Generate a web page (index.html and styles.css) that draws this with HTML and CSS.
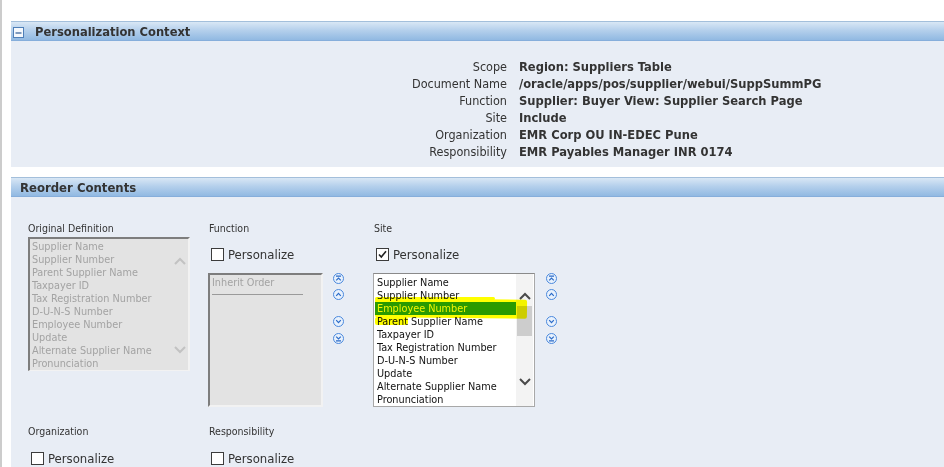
FILE: index.html
```html
<!DOCTYPE html>
<html>
<head>
<meta charset="utf-8">
<link rel="stylesheet" href="styles.css">
</head>
<body>
<div class="page">
  <div class="section">
    <div class="hdr hdr-ctx">
      <span class="collapse"><svg width="11" height="11" viewBox="0 0 11 11"><rect x="0.5" y="0.5" width="10" height="10" fill="#f4f8fd" stroke="#4f7fb8"/><path d="M2.5 6 H8.5" stroke="#2d5a94" stroke-width="1.2"/></svg></span>
      <span class="hdr-title">Personalization Context</span>
    </div>
    <div class="body ctx">
      <div class="lbl">Scope</div><div class="val">Region: Suppliers Table</div>
      <div class="lbl">Document Name</div><div class="val">/oracle/apps/pos/supplier/webui/SuppSummPG</div>
      <div class="lbl">Function</div><div class="val">Supplier: Buyer View: Supplier Search Page</div>
      <div class="lbl">Site</div><div class="val">Include</div>
      <div class="lbl">Organization</div><div class="val">EMR Corp OU IN-EDEC Pune</div>
      <div class="lbl">Responsibility</div><div class="val">EMR Payables Manager INR 0174</div>
    </div>
  </div>

  <div class="section sec2">
    <div class="hdr hdr-reorder"><span class="hdr-title">Reorder Contents</span></div>
    <div class="body reorder">
      <div class="col c1">
        <div class="cap">Original Definition</div>
        <div class="list list-dis">
          <div class="items">
            <div>Supplier Name</div>
            <div>Supplier Number</div>
            <div>Parent Supplier Name</div>
            <div>Taxpayer ID</div>
            <div>Tax Registration Number</div>
            <div>D-U-N-S Number</div>
            <div>Employee Number</div>
            <div>Update</div>
            <div>Alternate Supplier Name</div>
            <div>Pronunciation</div>
          </div>
          <div class="sbar sbar-dis">
            <svg class="chev-up" width="12" height="8" viewBox="0 0 12 8"><path d="M1 7 L6 2 L11 7" stroke="#c2c2c2" stroke-width="2" fill="none"/></svg>
            <svg class="chev-dn" width="12" height="8" viewBox="0 0 12 8"><path d="M1 1 L6 6 L11 1" stroke="#c2c2c2" stroke-width="2" fill="none"/></svg>
          </div>
        </div>
      </div>

      <div class="col c2">
        <div class="cap">Function</div>
        <label class="chk"><span class="box"></span>Personalize</label>
        <div class="listrow">
          <div class="list list-fn">
            <div class="fn-item">Inherit Order</div>
            <div class="fn-sep"></div>
          </div>
          <div class="movers">
            <svg class="mv mv1" width="11" height="11" viewBox="0 0 11 11"><circle cx="5.5" cy="5.5" r="5" fill="#e8f1fc" stroke="#4a88dc"/><path d="M3 3.2 H8 M3.2 7.3 L5.5 5 L7.8 7.3" stroke="#2a6bc8" stroke-width="1.2" fill="none"/></svg>
            <svg class="mv mv2" width="11" height="11" viewBox="0 0 11 11"><circle cx="5.5" cy="5.5" r="5" fill="#e8f1fc" stroke="#4a88dc"/><path d="M3.2 6.8 L5.5 4.4 L7.8 6.8" stroke="#2a6bc8" stroke-width="1.2" fill="none"/></svg>
            <svg class="mv mv3" width="11" height="11" viewBox="0 0 11 11"><circle cx="5.5" cy="5.5" r="5" fill="#e8f1fc" stroke="#4a88dc"/><path d="M3.2 4.2 L5.5 6.6 L7.8 4.2" stroke="#2a6bc8" stroke-width="1.2" fill="none"/></svg>
            <svg class="mv mv4" width="11" height="11" viewBox="0 0 11 11"><circle cx="5.5" cy="5.5" r="5" fill="#e8f1fc" stroke="#4a88dc"/><path d="M3.2 3.7 L5.5 6 L7.8 3.7 M3 7.8 H8" stroke="#2a6bc8" stroke-width="1.2" fill="none"/></svg>
          </div>
        </div>
      </div>

      <div class="col c3">
        <div class="cap">Site</div>
        <label class="chk"><span class="box checked"><svg width="11" height="11" viewBox="0 0 11 11"><path d="M2 5.5 L4.3 8 L9 2.2" stroke="#222" stroke-width="1.6" fill="none"/></svg></span>Personalize</label>
        <div class="listrow">
          <div class="list list-site">
            <div class="items">
              <div>Supplier Name</div>
              <div>Supplier Number</div>
              <div class="sel">Employee Number</div>
              <div>Parent Supplier Name</div>
              <div>Taxpayer ID</div>
              <div>Tax Registration Number</div>
              <div>D-U-N-S Number</div>
              <div>Update</div>
              <div>Alternate Supplier Name</div>
              <div>Pronunciation</div>
            </div>
            <div class="sbar">
              <svg class="chev-up" width="12" height="8" viewBox="0 0 12 8"><path d="M1 7 L6 2 L11 7" stroke="#4a4a4a" stroke-width="2" fill="none"/></svg>
              <div class="thumb"></div>
              <svg class="chev-dn" width="12" height="8" viewBox="0 0 12 8"><path d="M1 1 L6 6 L11 1" stroke="#4a4a4a" stroke-width="2" fill="none"/></svg>
            </div>
            <div class="mark mark-main"></div>
            <div class="mark mark-top"></div>
            <div class="mark mark-parent"></div>
          </div>
          <div class="movers">
            <svg class="mv mv1" width="11" height="11" viewBox="0 0 11 11"><circle cx="5.5" cy="5.5" r="5" fill="#e8f1fc" stroke="#4a88dc"/><path d="M3 3.2 H8 M3.2 7.3 L5.5 5 L7.8 7.3" stroke="#2a6bc8" stroke-width="1.2" fill="none"/></svg>
            <svg class="mv mv2" width="11" height="11" viewBox="0 0 11 11"><circle cx="5.5" cy="5.5" r="5" fill="#e8f1fc" stroke="#4a88dc"/><path d="M3.2 6.8 L5.5 4.4 L7.8 6.8" stroke="#2a6bc8" stroke-width="1.2" fill="none"/></svg>
            <svg class="mv mv3" width="11" height="11" viewBox="0 0 11 11"><circle cx="5.5" cy="5.5" r="5" fill="#e8f1fc" stroke="#4a88dc"/><path d="M3.2 4.2 L5.5 6.6 L7.8 4.2" stroke="#2a6bc8" stroke-width="1.2" fill="none"/></svg>
            <svg class="mv mv4" width="11" height="11" viewBox="0 0 11 11"><circle cx="5.5" cy="5.5" r="5" fill="#e8f1fc" stroke="#4a88dc"/><path d="M3.2 3.7 L5.5 6 L7.8 3.7 M3 7.8 H8" stroke="#2a6bc8" stroke-width="1.2" fill="none"/></svg>
          </div>
        </div>
      </div>

      <div class="col c1 row2">
        <div class="cap">Organization</div>
        <label class="chk"><span class="box"></span>Personalize</label>
      </div>
      <div class="col c2 row2">
        <div class="cap">Responsibility</div>
        <label class="chk"><span class="box"></span>Personalize</label>
      </div>
    </div>
  </div>
</div>
</body>
</html>
```

FILE: styles.css
```css
html, body {
  margin: 0;
  padding: 0;
  background: #ffffff;
  overflow: hidden;
}
body {
  width: 944px;
  height: 467px;
  font-family: "DejaVu Sans Condensed", "DejaVu Sans", sans-serif;
  font-stretch: condensed;
  color: #333333;
}
.page {
  border-left: 2px solid #cccccc;
  height: 467px;
  padding-left: 9px;
  padding-top: 21px;
  box-sizing: border-box;
  margin-right: -30px;
}
.section {
  background: #e8edf5;
}
.sec2 {
  margin-top: 10px;
}
.hdr {
  height: 20px;
  box-sizing: border-box;
  border-top: 1px solid #a3bfdb;
  border-bottom: 1px solid #86aedb;
  background: linear-gradient(#d9e7f5, #b5d0ec 45%, #91b9e2);
  display: flex;
  align-items: center;
}
.hdr-title {
  font-weight: bold;
  font-size: 13px;
  color: #333333;
}
.hdr-ctx .hdr-title {
  font-size: 12.8px;
}
.collapse {
  display: flex;
  margin-left: 2px;
  margin-right: 11px;
  margin-top: 3px;
}
.hdr-reorder .hdr-title {
  margin-left: 9px;
}
.ctx {
  display: grid;
  grid-template-columns: 496px 1fr;
  column-gap: 12px;
  padding: 17px 0 7px 0;
  font-size: 12.5px;
  line-height: 17px;
}
.lbl {
  text-align: right;
}
.val {
  font-weight: bold;
  font-size: 12.8px;
}
.reorder {
  display: grid;
  grid-template-columns: 180px 165px 1fr;
  padding: 24px 0 0 17px;
  height: 270px;
  box-sizing: border-box;
  align-content: start;
}
.cap {
  font-size: 10.5px;
  line-height: 14px;
  height: 14px;
}
.c2 .cap, .c3 .cap {
  margin-left: 1px;
}
.list-dis {
  margin-top: 2px;
  width: 162px;
  height: 134px;
  box-sizing: border-box;
  border-style: solid;
  border-width: 2px 2px 1px 2px;
  border-color: #7d7d7d #f2f2f2 #f2f2f2 #7d7d7d;
  background: #e3e3e3;
  display: flex;
}
.items {
  flex: 1;
  padding: 1px 0 0 2px;
  font-size: 10.8px;
  line-height: 13px;
  white-space: nowrap;
  overflow: hidden;
}
.list-dis .items {
  color: #a3a3a3;
}
.sbar {
  width: 17px;
  position: relative;
  display: flex;
  flex-direction: column;
  align-items: center;
}
.sbar-dis .chev-up { margin-top: 18px; }
.sbar-dis .chev-dn { margin-top: auto; margin-bottom: 16px; }
.chk {
  display: flex;
  align-items: center;
  font-size: 13px;
  line-height: 15px;
  height: 15px;
  margin-top: 12px;
  color: #333333;
}
.box {
  width: 13px;
  height: 13px;
  box-sizing: border-box;
  border: 1px solid #3c3c3c;
  background: #ffffff;
  margin: 0 4px 0 3px;
  display: flex;
  align-items: center;
  justify-content: center;
}
.listrow {
  display: flex;
  margin-top: 11px;
}
.list-fn {
  width: 115px;
  height: 134px;
  box-sizing: border-box;
  border: 2px solid;
  border-color: #7d7d7d #f2f2f2 #f2f2f2 #7d7d7d;
  background: #e3e3e3;
  padding: 1px 0 0 2px;
}
.fn-item {
  color: #a3a3a3;
  font-size: 10.8px;
  line-height: 13px;
}
.fn-sep {
  width: 91px;
  height: 1px;
  background: #9a9a9a;
  margin-top: 5px;
}
.movers {
  display: flex;
  flex-direction: column;
  margin-left: 10px;
}
.mv { display: block; }
.mv1 { margin-top: 0; }
.mv2 { margin-top: 5px; }
.mv3 { margin-top: 16px; }
.mv4 { margin-top: 6px; }
.c3 .movers { margin-left: 11px; }
.list-site {
  width: 162px;
  height: 134px;
  box-sizing: border-box;
  border: 1px solid #a8a8a8;
  border-top-color: #8a8a8a;
  background: #ffffff;
  display: flex;
  position: relative;
}
.list-site .items {
  padding: 2px 0 0 3px;
  color: #111111;
}
.list-site .sel {
  background: #2a9a00;
  color: #f4f57a;
  margin-left: -2px;
  padding-left: 2px;
}
.list-site .sbar {
  background: #f3f3f3;
  margin: 0 1px 0 0;
}
.list-site .chev-up { margin-top: 18px; }
.thumb {
  width: 15px;
  height: 30px;
  background: #cdcdcd;
  margin-top: 6px;
}
.list-site .chev-dn { margin-top: auto; margin-bottom: 20px; }
.mark {
  position: absolute;
  background: #ffff00;
  mix-blend-mode: multiply;
  border-radius: 2px;
}
.mark-main {
  left: 1px;
  top: 25px;
  width: 152px;
  height: 19px;
  transform: rotate(0.6deg);
}
.mark-top {
  left: 1px;
  top: 23px;
  width: 120px;
  height: 3px;
}
.mark-parent {
  left: 1px;
  top: 43px;
  width: 33px;
  height: 8px;
}
.row2 {
  margin-top: 17px;
}
.row2 .chk {
  margin-top: 13px;
}
```
